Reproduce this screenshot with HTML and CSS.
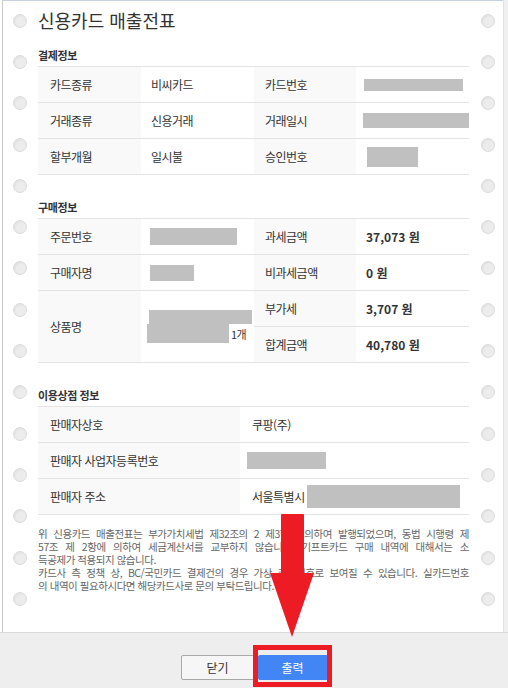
FILE: index.html
```html
<!DOCTYPE html>
<html lang="ko">
<head>
    <meta charset="UTF-8">
    <meta name="viewport" content="width=device-width, initial-scale=1.0">
    <title>신용카드 매출전표</title>
    <link rel="stylesheet" href="styles.css">
</head>
<body>

<div class="page">
    <div class="paper">
        <!-- 왼쪽 구멍 -->
        <div class="holes left">
            <span class="hole"></span><span class="hole"></span><span class="hole"></span>
            <span class="hole"></span><span class="hole"></span><span class="hole"></span>
            <span class="hole"></span><span class="hole"></span><span class="hole"></span>
            <span class="hole"></span><span class="hole"></span><span class="hole"></span>
            <span class="hole"></span><span class="hole"></span><span class="hole"></span>
        </div>

        <div class="content">
            <h1>신용카드 매출전표</h1>

            <h2>결제정보</h2>
            <table class="info">
                <colgroup><col class="c1"><col class="c2"><col class="c3"><col class="c4"></colgroup>
                <tr>
                    <th>카드종류</th><td>비씨카드</td>
                    <th class="l2">카드번호</th><td class="mk"><span class="mask m-card"></span></td>
                </tr>
                <tr>
                    <th>거래종류</th><td>신용거래</td>
                    <th class="l2">거래일시</th><td class="mk"><span class="mask m-date"></span></td>
                </tr>
                <tr>
                    <th>할부개월</th><td>일시불</td>
                    <th class="l2">승인번호</th><td class="mk"><span class="mask m-appr"></span></td>
                </tr>
            </table>

            <h2 class="next">구매정보</h2>
            <table class="info">
                <colgroup><col class="c1"><col class="c2"><col class="c3"><col class="c4"></colgroup>
                <tr>
                    <th>주문번호</th><td class="mk"><span class="mask m-order"></span></td>
                    <th class="l2">과세금액</th><td class="amt">37,073 원</td>
                </tr>
                <tr>
                    <th>구매자명</th><td class="mk"><span class="mask m-buyer"></span></td>
                    <th class="l2">비과세금액</th><td class="amt">0 원</td>
                </tr>
                <tr>
                    <th rowspan="2">상품명</th>
                    <td rowspan="2" class="mk">
                        <span class="mask m-prod1"></span>
                        <div class="prod-line"><span class="mask m-prod2"></span>1개</div>
                    </td>
                    <th class="l2">부가세</th><td class="amt">3,707 원</td>
                </tr>
                <tr>
                    <th class="l2">합계금액</th><td class="amt">40,780 원</td>
                </tr>
            </table>

            <h2 class="next">이용상점 정보</h2>
            <table class="info shop">
                <colgroup><col class="s1"><col class="s2"></colgroup>
                <tr><th>판매자상호</th><td>쿠팡(주)</td></tr>
                <tr><th>판매자 사업자등록번호</th><td class="mk"><span class="mask m-biz"></span></td></tr>
                <tr>
                    <th>판매자 주소</th>
                    <td><div class="addr">서울특별시<span class="mask m-addr"></span></div></td>
                </tr>
            </table>

            <p class="note">
                <span class="full">위 신용카드 매출전표는 부가가치세법 제32조의 2 제3항에 의하여 발행되었으며, 동법 시행령 제</span>
                <span class="full">57조 제 2항에 의하여 세금계산서를 교부하지 않습니다. 기프트카드 구매 내역에 대해서는 소</span>
                <span>득공제가 적용되지 않습니다.</span>
                <span class="full">카드사 측 정책 상, BC/국민카드 결제건의 경우 가상 카드번호로 보여질 수 있습니다. 실카드번호</span>
                <span>의 내역이 필요하시다면 해당카드사로 문의 부탁드립니다.</span>
            </p>
        </div>

        <!-- 오른쪽 구멍 -->
        <div class="holes right">
            <span class="hole"></span><span class="hole"></span><span class="hole"></span>
            <span class="hole"></span><span class="hole"></span><span class="hole"></span>
            <span class="hole"></span><span class="hole"></span><span class="hole"></span>
            <span class="hole"></span><span class="hole"></span><span class="hole"></span>
            <span class="hole"></span><span class="hole"></span><span class="hole"></span>
        </div>
    </div>
    <div class="scroll"></div>
</div>

<div class="footer">
    <button class="btn">닫기</button>
    <button class="btn btn-print">출력</button>
</div>

<!-- 표시 (빨간 화살표와 상자) -->
<svg class="mark-arrow" viewBox="0 0 50 130" width="50" height="130">
    <path d="M13 5 Q13 4 14 4 H35 Q36 4 36 5 V63 H46 L24 127 L2 63 H13 Z" fill="#ed1c24"/>
</svg>
<div class="mark-box"></div>

</body>
</html>
```

FILE: styles.css
```css
* {
    box-sizing: border-box;
}

body {
    margin: 0;
    width: 508px;
    height: 688px;
    position: relative;
    overflow: hidden;
    font-family: "Noto Sans CJK KR", "Noto Sans", sans-serif;
    color: #333;
    background-color: #fff;
}

.page {
    display: flex;
    height: 632px;
}

.paper {
    flex: 1;
    margin-left: 2px;
    border-left: 1px solid #c9c9c9;
    border-top: 1px solid #c7d1e2;
    display: grid;
    grid-template-columns: 35px 1fr 34px;
}

.scroll {
    width: 5px;
    background-color: #f0f0f0;
    border-left: 1px solid #e2e2e2;
}

.holes {
    display: flex;
    flex-direction: column;
    gap: 27.3px;
    padding-top: 12.7px;
}

.holes.left {
    padding-left: 10px;
}

.holes.right {
    padding-left: 12px;
}

.hole {
    width: 14px;
    height: 14px;
    border-radius: 50%;
    background-color: #ececec;
    border: 1px solid #dcdcdc;
    box-shadow: inset 1px 1px 2px rgba(0, 0, 0, 0.05);
}

.content {
    padding-top: 8px;
}

h1 {
    margin: 0 0 17px;
    font-size: 18px;
    line-height: 22px;
    font-weight: normal;
    letter-spacing: 0;
    color: #333;
}

h2 {
    margin: 0 0 4px;
    font-size: 11px;
    line-height: 14px;
    font-weight: bold;
    letter-spacing: -0.4px;
    color: #333;
}

h2.next {
    margin-top: 25px;
}

.info {
    width: 100%;
    border-collapse: collapse;
    table-layout: fixed;
    border-top: 1px solid #e3e3e3;
}

.info .c1 { width: 103px; }
.info .c2 { width: 113px; }
.info .c3 { width: 102px; }
.info .c4 { width: 113px; }
.info .s1 { width: 202px; }
.info .s2 { width: 229px; }

.info th,
.info td {
    height: 36px;
    padding: 0;
    border-bottom: 1px solid #e3e3e3;
    font-size: 12px;
    text-align: left;
    vertical-align: middle;
    letter-spacing: -0.5px;
    white-space: nowrap;
}

.info th {
    font-weight: normal;
    background-color: #f9f9f9;
    padding-left: 12px;
}

.info th.l2 {
    padding-left: 11px;
}

.info td {
    padding-left: 10px;
}

.info td.mk {
    padding-left: 0;
}

.info td.amt {
    font-weight: bold;
    letter-spacing: 0;
}

.shop td {
    padding-left: 12px;
}

.mask {
    display: block;
    background-color: #c0c0c0;
}

.m-card { width: 99px; height: 12px; margin-left: 8px; }
.m-date { width: 106px; height: 15px; margin-left: 7px; }
.m-appr { width: 51px; height: 20px; margin-left: 11px; }
.m-order { width: 87px; height: 17px; margin-left: 9px; }
.m-buyer { width: 44px; height: 16px; margin-left: 9px; }
.m-prod1 { width: 103px; height: 14px; margin-left: 8px; }
.m-prod2 { width: 82px; height: 19px; margin-left: 6px; }
.m-biz { width: 79px; height: 17px; margin-left: 7px; }
.m-addr { width: 153px; height: 23px; margin-left: 2px; }

.prod-line {
    display: flex;
    align-items: center;
    gap: 2px;
    font-size: 11px;
}

.addr {
    display: flex;
    align-items: center;
}

.note {
    margin: 12px 0 0;
    font-size: 10.5px;
    line-height: 13px;
    letter-spacing: -0.45px;
    color: #666;
}

.note span {
    display: block;
    white-space: nowrap;
}

.note .full {
    text-align: justify;
    text-align-last: justify;
}

.footer {
    height: 56px;
    padding-top: 22px;
    background-color: #eeeeee;
    border-top: 1px solid #d9d9d9;
    display: flex;
    justify-content: center;
    align-items: flex-start;
    gap: 3px;
}

.btn {
    width: 74px;
    height: 25px;
    padding: 0;
    font-family: inherit;
    font-size: 12px;
    color: #333;
    background-color: #f6f6f6;
    border: 1px solid #a9a9a9;
    border-radius: 2px;
    cursor: pointer;
}

.btn-print {
    width: 70px;
    color: #fff;
    background-color: #4286f5;
    border-color: #4286f5;
}

.mark-arrow {
    position: absolute;
    left: 268px;
    top: 510px;
}

.mark-box {
    position: absolute;
    left: 253px;
    top: 645px;
    width: 79px;
    height: 42px;
    border: 5px solid #ed1c24;
}
```
